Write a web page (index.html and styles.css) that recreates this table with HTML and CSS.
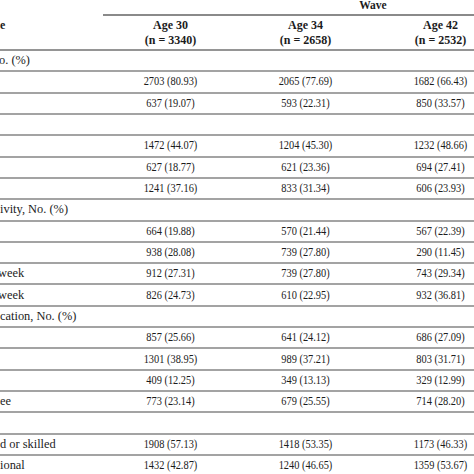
FILE: index.html
```html
<!DOCTYPE html>
<html lang="en">
<head>
<meta charset="utf-8">
<title>Table – Wave</title>
<link rel="stylesheet" href="styles.css">
</head>
<body>
<div class="table">
  <div class="row head-top">
    <div class="cell label"></div>
    <div class="cell wave">Wave</div>
  </div>
  <div class="row head">
    <div class="cell label head-label"><span class="cut">e</span></div>
    <div class="cell col">Age 30<br>(n = 3340)</div>
    <div class="cell col">Age 34<br>(n = 2658)</div>
    <div class="cell col">Age 42<br>(n = 2532)</div>
    <div class="cell col"></div>
  </div>

  <div class="row section"><div class="cell label"><span class="cut c1">o. (%)</span></div><div class="cell"></div><div class="cell"></div><div class="cell"></div><div class="cell"></div></div>
  <div class="row"><div class="cell label"></div><div class="cell num">2703 (80.93)</div><div class="cell num">2065 (77.69)</div><div class="cell num">1682 (66.43)</div><div class="cell num"></div></div>
  <div class="row"><div class="cell label"></div><div class="cell num">637 (19.07)</div><div class="cell num">593 (22.31)</div><div class="cell num">850 (33.57)</div><div class="cell num"></div></div>

  <div class="row section"><div class="cell label"></div><div class="cell"></div><div class="cell"></div><div class="cell"></div><div class="cell"></div></div>
  <div class="row"><div class="cell label"></div><div class="cell num">1472 (44.07)</div><div class="cell num">1204 (45.30)</div><div class="cell num">1232 (48.66)</div><div class="cell num"></div></div>
  <div class="row"><div class="cell label"></div><div class="cell num">627 (18.77)</div><div class="cell num">621 (23.36)</div><div class="cell num">694 (27.41)</div><div class="cell num"></div></div>
  <div class="row"><div class="cell label"></div><div class="cell num">1241 (37.16)</div><div class="cell num">833 (31.34)</div><div class="cell num">606 (23.93)</div><div class="cell num"></div></div>

  <div class="row section"><div class="cell label"><span class="cut">ivity, No. (%)</span></div><div class="cell"></div><div class="cell"></div><div class="cell"></div><div class="cell"></div></div>
  <div class="row"><div class="cell label"></div><div class="cell num">664 (19.88)</div><div class="cell num">570 (21.44)</div><div class="cell num">567 (22.39)</div><div class="cell num"></div></div>
  <div class="row"><div class="cell label"></div><div class="cell num">938 (28.08)</div><div class="cell num">739 (27.80)</div><div class="cell num">290 (11.45)</div><div class="cell num"></div></div>
  <div class="row"><div class="cell label"><span class="cut c3">week</span></div><div class="cell num">912 (27.31)</div><div class="cell num">739 (27.80)</div><div class="cell num">743 (29.34)</div><div class="cell num"></div></div>
  <div class="row"><div class="cell label"><span class="cut c3">week</span></div><div class="cell num">826 (24.73)</div><div class="cell num">610 (22.95)</div><div class="cell num">932 (36.81)</div><div class="cell num"></div></div>

  <div class="row section"><div class="cell label"><span class="cut">cation, No. (%)</span></div><div class="cell"></div><div class="cell"></div><div class="cell"></div><div class="cell"></div></div>
  <div class="row"><div class="cell label"></div><div class="cell num">857 (25.66)</div><div class="cell num">641 (24.12)</div><div class="cell num">686 (27.09)</div><div class="cell num"></div></div>
  <div class="row"><div class="cell label"></div><div class="cell num">1301 (38.95)</div><div class="cell num">989 (37.21)</div><div class="cell num">803 (31.71)</div><div class="cell num"></div></div>
  <div class="row"><div class="cell label"></div><div class="cell num">409 (12.25)</div><div class="cell num">349 (13.13)</div><div class="cell num">329 (12.99)</div><div class="cell num"></div></div>
  <div class="row"><div class="cell label"><span class="cut">ee</span></div><div class="cell num">773 (23.14)</div><div class="cell num">679 (25.55)</div><div class="cell num">714 (28.20)</div><div class="cell num"></div></div>

  <div class="row section"><div class="cell label"></div><div class="cell"></div><div class="cell"></div><div class="cell"></div><div class="cell"></div></div>
  <div class="row"><div class="cell label"><span class="cut">d or skilled</span></div><div class="cell num">1908 (57.13)</div><div class="cell num">1418 (53.35)</div><div class="cell num">1173 (46.33)</div><div class="cell num"></div></div>
  <div class="row"><div class="cell label"><span class="cut">ional</span></div><div class="cell num">1432 (42.87)</div><div class="cell num">1240 (46.65)</div><div class="cell num">1359 (53.67)</div><div class="cell num"></div></div>
</div>
</body>
</html>
```
FILE: styles.css
```css
html, body {
  margin: 0;
  padding: 0;
  background: #ffffff;
  overflow: hidden;
}

body {
  width: 474px;
  height: 474px;
  font-family: "Liberation Serif", "Times New Roman", serif;
  color: #1c1c1c;
}

.table {
  width: 643px;
}

.row {
  display: grid;
  grid-template-columns: 103px repeat(4, 135px);
  box-sizing: border-box;
  height: 21.32px;
  border-bottom: 2px solid #a3a3a3;
  align-items: center;
}

.cell {
  font-size: 11px;
  line-height: 13px;
  white-space: nowrap;
  overflow: hidden;
}

.label {
  font-size: 12.4px;
  text-align: left;
}

.cut {
  display: block;
}

.c1 {
  margin-left: -1px;
}

.c3 {
  margin-left: -2px;
}

.num {
  text-align: center;
  font-size: 11.8px;
  transform: scaleX(0.88);
  transform-origin: 50% 50%;
}

.head-top {
  height: 16px;
  border-bottom: none;
  align-items: stretch;
}

.wave {
  grid-column: 2 / span 4;
  text-align: center;
  font-weight: bold;
  font-size: 11.5px;
  line-height: 10px;
  box-sizing: border-box;
  border-bottom: 2px solid #8a8a8a;
}

.head {
  height: 35px;
  border-bottom: 2.5px solid #959595;
  align-items: start;
  padding-top: 2px;
}

.col {
  text-align: center;
  font-weight: bold;
  font-size: 12px;
  line-height: 15px;
}

.head-label {
  font-weight: bold;
  font-size: 12px;
  line-height: 15px;
}
```
